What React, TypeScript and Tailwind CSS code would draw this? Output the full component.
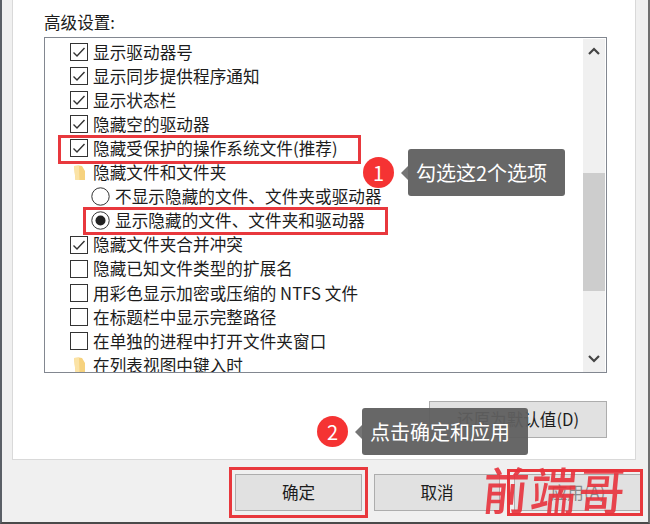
import React from "react";

const F = '"Microsoft YaHei","Noto Sans CJK SC","Liberation Sans",sans-serif';

function Check({ on }: { on: boolean }) {
  return (
    <svg width="18" height="18" viewBox="0 0 18 18" className="shrink-0">
      <rect x="0.5" y="0.5" width="17" height="17" fill="#fff" stroke="#333" />
      {on && <path d="M3.5 9.5 L7 13 L14.5 5" fill="none" stroke="#333" strokeWidth="1.4" />}
    </svg>
  );
}

function Radio({ on }: { on: boolean }) {
  return (
    <svg width="19" height="19" viewBox="0 0 19 19" className="shrink-0">
      <circle cx="9.5" cy="9.5" r="8.7" fill="#fff" stroke="#333" strokeWidth="1" />
      {on && <circle cx="9.5" cy="9.5" r="5" fill="#222" />}
    </svg>
  );
}

function Folder() {
  return (
    <svg width="13" height="16" viewBox="0 0 13 16" className="shrink-0">
      <path d="M1 1 L6 0.5 L9 1 L12 6 L12 15 L2.5 15 Z" fill="#f6d27e" />
      <path d="M1 1 L6 0.5 L6.5 15 L2.5 15 Z" fill="#fbe3a6" />
    </svg>
  );
}

type Row = { t: string; k: "on" | "off" | "folder" | "r0" | "r1" };
const rows: Row[] = [
  { t: "显示驱动器号", k: "on" },
  { t: "显示同步提供程序通知", k: "on" },
  { t: "显示状态栏", k: "on" },
  { t: "隐藏空的驱动器", k: "on" },
  { t: "隐藏受保护的操作系统文件(推荐)", k: "on" },
  { t: "隐藏文件和文件夹", k: "folder" },
  { t: "不显示隐藏的文件、文件夹或驱动器", k: "r0" },
  { t: "显示隐藏的文件、文件夹和驱动器", k: "r1" },
  { t: "隐藏文件夹合并冲突", k: "on" },
  { t: "隐藏已知文件类型的扩展名", k: "off" },
  { t: "用彩色显示加密或压缩的 NTFS 文件", k: "off" },
  { t: "在标题栏中显示完整路径", k: "off" },
  { t: "在单独的进程中打开文件夹窗口", k: "off" },
  { t: "在列表视图中键入时", k: "folder" },
];

function ListRow({ r }: { r: Row }) {
  const radio = r.k === "r0" || r.k === "r1";
  return (
    <div className={`h-[24.1px] shrink-0 flex items-center whitespace-nowrap ${radio ? "pl-[46px] gap-[5px]" : "pl-[25px] gap-[5px]"}`}>
      {radio ? (
        <Radio on={r.k === "r1"} />
      ) : r.k === "folder" ? (
        <div className="w-[18px] flex justify-center"><Folder /></div>
      ) : (
        <Check on={r.k === "on"} />
      )}
      <span className="tracking-[0.07px]">{r.t}</span>
    </div>
  );
}

function Btn({ label, w, cls = "" }: { label: string; w: string; cls?: string }) {
  return (
    <div className={`${w} h-[37px] flex items-center justify-center border border-[#adadad] bg-[#e1e1e1] ${cls}`}>
      {label}
    </div>
  );
}

function Note({ n, text, cls }: { n: string; text: string; cls: string }) {
  return (
    <div className={`absolute flex items-center ${cls}`}>
      <div className="w-[31px] h-[31px] rounded-full bg-[#f53333] text-white text-[20px] flex items-center justify-center">{n}</div>
      <div className="w-0 h-0 ml-[7px] border-y-[7px] border-y-transparent border-r-[7px] border-r-[#666666] opacity-90" />
      <div className="h-[47px] rounded-[3px] bg-[#5f5f5f]/95 text-white text-[20px] pl-[8px] pr-[18px] flex items-center whitespace-nowrap">{text}</div>
    </div>
  );
}

export default function App() {
  return (
    <div
      className="relative w-[650px] h-[524px] overflow-hidden bg-[#f0f0f0] text-[#1c1c1c] text-[16.6px] border-l-2 border-r-2 border-b-2 border-l-[#5a5f66] border-r-[#6f6f6f] border-b-[#4a4a4a]"
      style={{ fontFamily: F }}
    >
      <div className="absolute left-[-2px] top-0 w-[2px] h-[15px] bg-[#2f6ea5]" />
      <div className="ml-[10px] w-[624px] h-[460px] bg-white border-x border-b border-[#d9d9d9] pl-[31px] flex flex-col">
        <div className="h-[37px] pt-[9px] leading-[26px]">高级设置:</div>
        <div className="w-[563px] h-[336px] shrink-0 border border-[#828790] flex overflow-hidden">
          <div className="flex-1 pt-[2px] overflow-hidden flex flex-col">
            {rows.map((r) => (
              <ListRow key={r.t} r={r} />
            ))}
          </div>
          <div className="w-[22px] mr-[1px] mt-[1px] bg-[#f0f0f0] flex flex-col">
            <div className="h-[134px] flex justify-center pt-[8px]">
              <svg width="12" height="8" viewBox="0 0 12 8"><path d="M1 7 L6 2 L11 7" fill="none" stroke="#444" strokeWidth="2.2" /></svg>
            </div>
            <div className="h-[118px] bg-[#cdcdcd]" />
            <div className="flex-1 flex items-end justify-center pb-[9px]">
              <svg width="12" height="8" viewBox="0 0 12 8"><path d="M1 1 L6 6 L11 1" fill="none" stroke="#444" strokeWidth="2.2" /></svg>
            </div>
          </div>
        </div>
        <div className="mt-[28px] w-[563px] flex justify-end">
          <Btn label="还原为默认值(D)" w="w-[178px]" />
        </div>
      </div>
      <div className="mt-[14px] ml-[233px] flex gap-[12px]">
        <Btn label="确定" w="w-[127px]" cls="border-[#7f9db9]" />
        <Btn label="取消" w="w-[126px]" />
        <Btn label="应用(A)" w="w-[128px] ml-[2px]" cls="bg-[#cccccc] text-[#8a8a8a]" />
      </div>

      <div className="absolute left-[56px] top-[135px] w-[303px] h-[29px] border-[3px] border-[#e8383d]" />
      <div className="absolute left-[81px] top-[207px] w-[305px] h-[28px] border-[3px] border-[#e8383d]" />
      <div className="absolute left-[227px] top-[467px] w-[139px] h-[51px] border-[3px] border-[#e8383d]" />
      <div className="absolute left-[505px] top-[469px] w-[136px] h-[47px] border-[3px] border-[#e8383d]" />

      <Note n="1" text="勾选这2个选项" cls="left-[361px] top-[149px]" />
      <Note n="2" text="点击确定和应用" cls="left-[315px] top-[408px]" />

      <div className="absolute left-[481px] top-[455px] text-[46px] leading-[66px] font-medium text-[#e8323c] whitespace-nowrap tracking-[2px] -skew-x-6 scale-y-110 opacity-90">
        前端哥
      </div>
    </div>
  );
}
